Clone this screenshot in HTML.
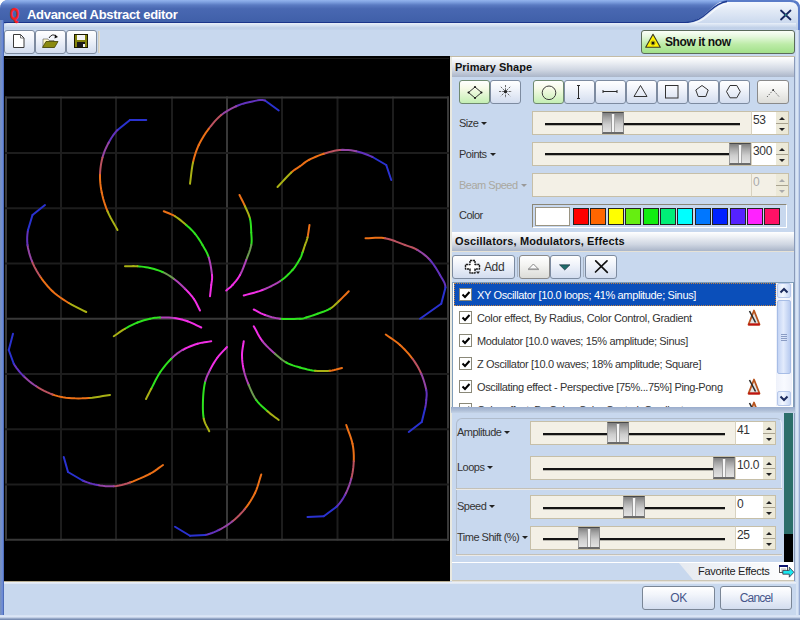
<!DOCTYPE html>
<html><head><meta charset="utf-8">
<style>
*{box-sizing:border-box}
html,body{margin:0;padding:0;width:800px;height:620px;overflow:hidden;background:#c8d8ee;font-family:"Liberation Sans",sans-serif;}
.a{position:absolute}
svg.a{display:block}
#title{left:0;top:0;width:800px;height:23px;background:linear-gradient(#8fb0ea 0px,#7ea2e2 2px,#5a7ac0 5px,#4a69b2 8px,#4363ab 14px,#4262aa 21px,#1a348a 22px,#1a348a 23px);}
#ttext{left:27px;top:7px;color:#fff;font-weight:bold;font-size:13px;letter-spacing:-0.3px;white-space:nowrap;line-height:15px}
.btn{border:1px solid #7d8ba0;border-radius:3px;background:linear-gradient(#ffffff 0%,#f2f5fb 35%,#d3ddef 100%);}
.gbtn{border:1px solid #6f8a70;border-radius:3px;background:linear-gradient(#ffffff 0%,#f6fae6 35%,#c4efb4 100%);}
.lbl{font-size:11px;color:#333;white-space:nowrap;letter-spacing:-0.5px;line-height:12px}
.dd{display:inline-block;width:0;height:0;border-left:3px solid transparent;border-right:3px solid transparent;border-top:3px solid #222;vertical-align:middle;margin-left:3px;position:relative;top:-1px}
.slider{background:#f3f0e6;border:1px solid #c6bfa8;}
.track{height:2px;background:#141414;box-shadow:0 1px 0 rgba(0,0,0,0.25)}
.thumb{width:22px;background:linear-gradient(#7e7e7e 0%,#a4a4a4 25%,#cdcdcd 60%,#e2e2e2 100%);border-top:1px solid #4a4a4a;border-bottom:2px solid #6a6a6a;border-left:1px solid #9a9a9a;border-right:1px solid #8a8a8a}
.thumb:after{content:"";position:absolute;left:8px;top:1px;width:2px;bottom:0;background:#f6f6f6;border-left:1px solid #9c9c9c;border-right:1px solid #a8a8a8;box-sizing:content-box}
.edit{background:#fff;border:1px solid #c6bfa8;border-left:1px solid #d8d2c0;font-size:12px;color:#333;padding-left:1px;line-height:17px;letter-spacing:-0.3px;white-space:nowrap;overflow:hidden}
.spin{background:#ece9d8;border:1px solid #c6bfa8;border-left:none}
.spin:after{content:"";position:absolute;left:0;right:0;top:11px;height:1px;background:#a9a390}
.hdr{background:linear-gradient(#ffffff 0%,#eef1f5 25%,#cfd6e2 65%,#aab5c8 100%);}
.row{font-size:11px;color:#3a3a3a;white-space:nowrap;letter-spacing:-0.35px;line-height:12px}
.cb{width:13px;height:13px;border:1px solid #8a8878;background:#fff}
.up,.dn{position:absolute;left:3px;width:0;height:0;border-left:3px solid transparent;border-right:3px solid transparent}
.up{border-bottom:3px solid #222}
.dn{border-top:3px solid #222}
</style></head><body>
<!-- window frame -->
<svg class="a" style="left:0;top:0" width="800" height="30">
<defs>
<linearGradient id="tb" x1="0" y1="0" x2="0" y2="1"><stop offset="0" stop-color="#94b4ee"/><stop offset="0.09" stop-color="#7ea0e0"/><stop offset="0.22" stop-color="#5a7ac2"/><stop offset="0.38" stop-color="#4968b2"/><stop offset="1" stop-color="#3f5fa8"/></linearGradient>
<linearGradient id="tab" x1="0" y1="0" x2="0" y2="1"><stop offset="0" stop-color="#f4f8fe"/><stop offset="0.3" stop-color="#e2eaf6"/><stop offset="0.75" stop-color="#cbd9ee"/><stop offset="1" stop-color="#b9cbe6"/></linearGradient>
<linearGradient id="tlb" x1="0" y1="0" x2="0" y2="1"><stop offset="0" stop-color="#f0f5fc"/><stop offset="1" stop-color="#c9d9ef"/></linearGradient>
</defs>
<rect x="0" y="0" width="800" height="30" fill="#ffffff"/>
<path d="M0 30 V9 Q0 0 9 0 H792 Q800 0 800 8 V30 Z" fill="#5a7cc8"/>
<path d="M2 30 V10 Q2 2 10 2 H790 Q798 2 798 10 V30 Z" fill="url(#tab)"/>
<path d="M0 23 V9 Q0 0 9 0 H727 C720 1 715 5 709 10.5 C702 17 696 21.5 686 22.5 L686 23 Z" fill="url(#tb)"/>
<path d="M727 1.5 C720 2.5 715 6 709 11.5 C702 18 696 22 684 23" fill="none" stroke="#1c3a90" stroke-width="1.3"/>
<path d="M729 3 C722 4 717 7.5 711 13 C704 19 699 23 688 24" fill="none" stroke="#ffffff" stroke-opacity="0.7" stroke-width="1.2"/>
<rect x="0" y="22" width="686" height="1.2" fill="#1a348a"/>
<path d="M781 10.5 L790.5 19.5 M790.5 10.5 L781 19.5" stroke="#14245e" stroke-width="1.8" stroke-linecap="round"/>
<circle cx="785.75" cy="15" r="0.9" fill="#1f8a7a"/>
<rect x="0" y="22" width="4" height="8" fill="#4a6ab4"/>
<defs><linearGradient id="tlb2" x1="0" y1="0" x2="0" y2="1"><stop offset="0" stop-color="#e8eff9"/><stop offset="0.7" stop-color="#bfcfe7"/><stop offset="1" stop-color="#c4d4ec"/></linearGradient></defs>
<path d="M4 30 V27 Q4 23 8 23 H796 V30 Z" fill="url(#tlb2)"/>
</svg>
<div class="a" style="left:10px;top:5px;color:#ff2020;font-weight:bold;font-size:17px;transform:scaleX(0.68);transform-origin:0 0;line-height:19px;-webkit-text-stroke:0.6px #ee1818">Q</div>
<div class="a" id="ttext">Advanced Abstract editor</div>
<div class="a" style="left:0;top:20px;width:4px;height:600px;background:linear-gradient(90deg,#7a92b8,#6e8cd8 60%,#3e5eaa)"></div>
<div class="a" style="left:796px;top:30px;width:4px;height:590px;background:linear-gradient(90deg,#d8e4f4,#d8e4f4 50%,#8098c8)"></div>
<div class="a" style="left:0;top:615px;width:800px;height:5px;background:linear-gradient(#d6e2f4 0%,#dce6f6 40%,#a8b8d4 60%,#6a80a8 100%)"></div>

<!-- toolbar -->
<div class="a btn" style="left:4px;top:30px;width:31px;height:24px"></div>
<div class="a btn" style="left:35px;top:30px;width:31px;height:24px"></div>
<div class="a btn" style="left:66px;top:30px;width:31px;height:24px"></div>
<svg class="a" style="left:4px;top:30px" width="96" height="24">
<path d="M9.5 4.5 H16.5 L20 8 V17.5 H9.5 Z" fill="#fff" stroke="#3a3a3a" stroke-width="1"/>
<path d="M16.5 4.5 V8 H20" fill="none" stroke="#555" stroke-width="0.8"/>
<path d="M39 9 H44 L45 10.5 H50 V17 H39 Z" fill="#fff8c8" stroke="#555" stroke-width="0.6"/>
<path d="M38.5 17.5 L42 11.5 H54 L50.5 17.5 Z" fill="#8a8a10" stroke="#404000" stroke-width="0.8"/>
<path d="M45 8 Q48 3 52 6" fill="none" stroke="#222" stroke-width="1"/>
<path d="M51 4.5 L54 7 L50.5 8.5 Z" fill="#111"/>
<rect x="70.5" y="4.5" width="13" height="13" fill="#84840c" stroke="#1a1a00" stroke-width="1"/>
<rect x="73" y="5" width="8" height="5" fill="#f4f4f4"/>
<rect x="73" y="12" width="8" height="5" fill="#1a1a1a"/>
<rect x="79" y="14" width="2" height="3" fill="#f0f0f0"/>
</svg>
<div class="a" style="left:98px;top:31px;width:2px;height:22px;background:linear-gradient(90deg,#c8c4b4,#eeeae0)"></div>

<div class="a" style="left:641px;top:30px;width:154px;height:24px;border:1px solid #5a6a5a;border-radius:3px;background:linear-gradient(#fbfff8 0%,#e6f8de 25%,#bdeca8 60%,#a2e08a 100%)"></div>
<svg class="a" style="left:644px;top:32px" width="18" height="17"><path d="M9 2.3 L16.3 15.3 H1.7 Z" fill="#fff200" stroke="#3a3a20" stroke-width="1.1" stroke-linejoin="round"/><path d="M9 8.2 V13.8 M6.2 11 H11.8 M7 9 L11 13 M11 9 L7 13" stroke="#a8a020" stroke-width="0.9"/><circle cx="9" cy="11" r="1.5" fill="#111"/></svg>
<div class="a" style="left:665px;top:35px;font-size:12px;font-weight:bold;color:#111;letter-spacing:-0.4px;white-space:nowrap">Show it now</div>

<!-- canvas -->
<div class="a" id="canvas" style="left:4px;top:56px;width:446px;height:525px;background:#000"></div>
<svg class="a" style="left:4px;top:56px" width="446" height="525" viewBox="0 0 446 525"><line x1="1" y1="2.5" x2="445" y2="2.5" stroke="#181818" stroke-width="1"/><g stroke-width="2"><line x1="2.00" y1="40.60" x2="2.00" y2="484.80" stroke="#383838"/><line x1="57.00" y1="40.60" x2="57.00" y2="484.80" stroke="#1d1d1d"/><line x1="112.00" y1="40.60" x2="112.00" y2="484.80" stroke="#1d1d1d"/><line x1="168.00" y1="40.60" x2="168.00" y2="484.80" stroke="#1d1d1d"/><line x1="223.00" y1="40.60" x2="223.00" y2="484.80" stroke="#383838"/><line x1="278.00" y1="40.60" x2="278.00" y2="484.80" stroke="#1d1d1d"/><line x1="333.50" y1="40.60" x2="333.50" y2="484.80" stroke="#1d1d1d"/><line x1="389.00" y1="40.60" x2="389.00" y2="484.80" stroke="#1d1d1d"/><line x1="444.00" y1="40.60" x2="444.00" y2="484.80" stroke="#383838"/><line x1="1.00" y1="41.60" x2="445.00" y2="41.60" stroke="#383838"/><line x1="1.00" y1="96.88" x2="445.00" y2="96.88" stroke="#1d1d1d"/><line x1="1.00" y1="152.15" x2="445.00" y2="152.15" stroke="#1d1d1d"/><line x1="1.00" y1="207.42" x2="445.00" y2="207.42" stroke="#1d1d1d"/><line x1="1.00" y1="262.70" x2="445.00" y2="262.70" stroke="#383838"/><line x1="1.00" y1="317.98" x2="445.00" y2="317.98" stroke="#1d1d1d"/><line x1="1.00" y1="373.25" x2="445.00" y2="373.25" stroke="#1d1d1d"/><line x1="1.00" y1="428.52" x2="445.00" y2="428.52" stroke="#1d1d1d"/><line x1="1.00" y1="483.80" x2="445.00" y2="483.80" stroke="#383838"/></g><g stroke-width="2" stroke-linecap="round" stroke-linejoin="round" fill="none"><path d="M142.25 64.00 L126.00 64.00" stroke="#2a32d0"/><path d="M126.00 64.00 L113.50 74.00" stroke="#2a32d0"/><path d="M113.50 74.00 L111.80 75.91 L110.21 77.89 L108.73 79.94 L107.34 82.06 L106.02 84.24 L104.75 86.50" stroke="#6232bd"/><path d="M104.75 86.50 L103.52 88.83 L102.34 91.22 L101.23 93.69 L100.21 96.22 L99.30 98.83 L98.50 101.50" stroke="#9444a4"/><path d="M98.50 101.50 L97.82 104.27 L97.23 107.15 L96.75 110.09 L96.38 113.07 L96.13 116.05 L96.00 119.00" stroke="#bc5260"/><path d="M96.00 119.00 L96.00 121.90 L96.12 124.79 L96.36 127.67 L96.71 130.57 L97.18 133.51 L97.75 136.50" stroke="#ec7016"/><path d="M97.75 136.50 L98.43 139.55 L99.21 142.66 L100.11 145.80 L101.12 148.95 L102.25 152.11 L103.50 155.25" stroke="#ec7016"/><path d="M103.50 155.25 L104.92 158.38 L106.52 161.50 L108.23 164.62 L110.01 167.75 L111.78 170.88 L113.50 174.00" stroke="#a9b114"/><path d="M274.75 54.50 L261.00 44.50" stroke="#2a32d0"/><path d="M261.00 44.50 L258.56 44.05 L256.05 44.05 L253.50 44.36 L250.95 44.87 L248.44 45.46 L246.00 46.00" stroke="#6232bd"/><path d="M246.00 46.00 L243.65 46.50 L241.37 47.05 L239.12 47.67 L236.88 48.40 L234.60 49.25 L232.25 50.25" stroke="#6232bd"/><path d="M232.25 50.25 L229.79 51.39 L227.25 52.65 L224.67 54.03 L222.11 55.55 L219.62 57.20 L217.25 59.00" stroke="#9444a4"/><path d="M217.25 59.00 L214.99 60.97 L212.81 63.12 L210.69 65.41 L208.64 67.80 L206.66 70.26 L204.75 72.75" stroke="#bc5260"/><path d="M204.75 72.75 L202.89 75.30 L201.07 77.94 L199.33 80.64 L197.68 83.40 L196.14 86.19 L194.75 89.00" stroke="#ec7016"/><path d="M194.75 89.00 L193.51 91.80 L192.42 94.60 L191.44 97.44 L190.56 100.34 L189.75 103.35 L189.00 106.50" stroke="#ec7016"/><path d="M189.00 106.50 L188.34 109.82 L187.80 113.31 L187.33 116.89 L186.90 120.53 L186.47 124.16 L186.00 127.75" stroke="#a9b114"/><path d="M387.25 124.00 L382.25 109.00" stroke="#2a32d0"/><path d="M382.25 109.00 L368.50 101.00" stroke="#2a32d0"/><path d="M368.50 101.00 L365.94 99.86 L363.27 98.75 L360.53 97.70 L357.76 96.75 L354.99 95.92 L352.25 95.25" stroke="#6232bd"/><path d="M352.25 95.25 L349.54 94.72 L346.83 94.31 L344.12 94.03 L341.42 93.88 L338.71 93.87 L336.00 94.00" stroke="#9444a4"/><path d="M336.00 94.00 L333.28 94.31 L330.54 94.79 L327.80 95.41 L325.07 96.13 L322.39 96.92 L319.75 97.75" stroke="#bc5260"/><path d="M319.75 97.75 L317.11 98.65 L314.43 99.65 L311.78 100.72 L309.24 101.82 L306.87 102.93 L304.75 104.00" stroke="#ec7016"/><path d="M304.75 104.00 L302.93 105.04 L301.37 106.08 L299.98 107.12 L298.69 108.17 L297.39 109.21 L296.00 110.25" stroke="#ec7016"/><path d="M296.00 110.25 L294.60 111.20 L293.27 112.03 L291.94 112.86 L290.54 113.81 L289.00 114.98 L287.25 116.50" stroke="#ec7016"/><path d="M287.25 116.50 L285.25 118.44 L283.04 120.72 L280.69 123.23 L278.27 125.86 L275.85 128.49 L273.50 131.00" stroke="#a9b114"/><path d="M361.50 182.25 L364.74 182.17 L367.98 182.00 L371.22 181.83 L374.46 181.75 L377.72 181.86 L381.00 182.25" stroke="#ec7016"/><path d="M381.00 182.25 L384.39 183.00 L387.91 184.06 L391.44 185.31 L394.87 186.63 L398.09 187.90 L401.00 189.00" stroke="#bc5260"/><path d="M401.00 189.00 L403.52 189.88 L405.72 190.61 L407.72 191.30 L409.61 192.03 L411.50 192.90 L413.50 194.00" stroke="#bc5260"/><path d="M413.50 194.00 L415.61 195.32 L417.76 196.78 L419.91 198.38 L422.02 200.11 L424.06 201.99 L426.00 204.00" stroke="#9444a4"/><path d="M426.00 204.00 L427.86 206.24 L429.69 208.72 L431.44 211.34 L433.09 214.00 L434.62 216.59 L436.00 219.00" stroke="#6232bd"/><path d="M436.00 219.00 L437.29 221.18 L438.53 223.21 L439.64 225.17 L440.56 227.15 L441.20 229.23 L441.50 231.50" stroke="#6232bd"/><path d="M441.50 231.50 L437.25 247.75" stroke="#2a32d0"/><path d="M437.25 247.75 L416.00 262.75" stroke="#2a32d0"/><path d="M381.75 278.50 L384.15 280.21 L386.56 281.88 L388.98 283.55 L391.38 285.26 L393.73 287.06 L396.00 289.00" stroke="#ec7016"/><path d="M396.00 289.00 L398.23 291.09 L400.44 293.30 L402.59 295.59 L404.68 297.95 L406.65 300.35 L408.50 302.75" stroke="#ec7016"/><path d="M408.50 302.75 L410.22 305.16 L411.83 307.61 L413.34 310.09 L414.75 312.61 L416.05 315.16 L417.25 317.75" stroke="#bc5260"/><path d="M417.25 317.75 L418.36 320.46 L419.38 323.31 L420.30 326.19 L421.09 329.00 L421.75 331.64 L422.25 334.00" stroke="#9444a4"/><path d="M422.25 334.00 L422.55 336.04 L422.67 337.84 L422.64 339.47 L422.53 340.99 L422.38 342.48 L422.25 344.00" stroke="#6232bd"/><path d="M422.25 344.00 L422.14 345.48 L422.00 346.84 L421.83 348.17 L421.61 349.55 L421.34 351.05 L421.00 352.75" stroke="#6232bd"/><path d="M421.00 352.75 L417.75 366.00" stroke="#2a32d0"/><path d="M417.75 366.00 L404.75 376.00" stroke="#2a32d0"/><path d="M342.25 369.00 L343.35 372.14 L344.52 375.30 L345.69 378.45 L346.79 381.59 L347.75 384.70 L348.50 387.75" stroke="#ec7016"/><path d="M348.50 387.75 L349.04 390.74 L349.43 393.68 L349.67 396.58 L349.80 399.46 L349.82 402.35 L349.75 405.25" stroke="#ec7016"/><path d="M349.75 405.25 L349.59 408.18 L349.33 411.13 L348.97 414.08 L348.50 417.01 L347.93 419.91 L347.25 422.75" stroke="#bc5260"/><path d="M347.25 422.75 L346.45 425.58 L345.54 428.42 L344.52 431.22 L343.41 433.94 L342.23 436.55 L341.00 439.00" stroke="#9444a4"/><path d="M341.00 439.00 L339.73 441.28 L338.41 443.42 L337.02 445.44 L335.54 447.36 L333.95 449.21 L332.25 451.00" stroke="#6232bd"/><path d="M332.25 451.00 L319.75 460.25" stroke="#2a32d0"/><path d="M319.75 460.25 L303.50 461.00" stroke="#2a32d0"/><path d="M257.25 418.50 L256.25 421.62 L255.31 424.77 L254.36 427.92 L253.36 431.04 L252.26 434.08 L251.00 437.00" stroke="#ec7016"/><path d="M251.00 437.00 L249.58 439.82 L248.04 442.57 L246.39 445.25 L244.66 447.84 L242.85 450.34 L241.00 452.75" stroke="#ec7016"/><path d="M241.00 452.75 L239.08 455.06 L237.06 457.30 L234.98 459.44 L232.85 461.48 L230.68 463.42 L228.50 465.25" stroke="#bc5260"/><path d="M228.50 465.25 L226.28 466.97 L224.01 468.58 L221.70 470.09 L219.38 471.50 L217.06 472.80 L214.75 474.00" stroke="#9444a4"/><path d="M214.75 474.00 L212.47 475.10 L210.21 476.10 L207.95 477.00 L205.68 477.79 L203.36 478.46 L201.00 479.00" stroke="#6232bd"/><path d="M201.00 479.00 L186.00 479.75" stroke="#2a32d0"/><path d="M186.00 479.75 L171.00 470.75" stroke="#2a32d0"/><path d="M159.00 409.00 L156.91 410.46 L154.93 411.92 L152.94 413.38 L150.85 414.83 L148.57 416.29 L146.00 417.75" stroke="#ec7016"/><path d="M146.00 417.75 L143.03 419.27 L139.71 420.85 L136.20 422.44 L132.65 423.95 L129.20 425.33 L126.00 426.50" stroke="#ec7016"/><path d="M126.00 426.50 L123.07 427.47 L120.31 428.31 L117.64 429.00 L115.03 429.56 L112.41 429.97 L109.75 430.25" stroke="#bc5260"/><path d="M109.75 430.25 L107.03 430.37 L104.29 430.32 L101.55 430.14 L98.82 429.84 L96.14 429.45 L93.50 429.00" stroke="#9444a4"/><path d="M93.50 429.00 L90.92 428.48 L88.39 427.89 L85.89 427.20 L83.42 426.42 L80.96 425.52 L78.50 424.50" stroke="#6232bd"/><path d="M78.50 424.50 L64.00 416.00" stroke="#2a32d0"/><path d="M64.00 416.00 L59.75 401.00" stroke="#2a32d0"/><path d="M106.00 339.00 L102.44 339.53 L98.87 340.11 L95.30 340.69 L91.74 341.22 L88.22 341.67 L84.75 342.00" stroke="#a9b114"/><path d="M84.75 342.00 L81.30 342.21 L77.85 342.35 L74.44 342.41 L71.09 342.37 L67.85 342.24 L64.75 342.00" stroke="#ec7016"/><path d="M64.75 342.00 L61.82 341.67 L59.06 341.27 L56.39 340.77 L53.78 340.15 L51.16 339.40 L48.50 338.50" stroke="#ec7016"/><path d="M48.50 338.50 L45.75 337.42 L42.94 336.17 L40.14 334.78 L37.39 333.31 L34.74 331.78 L32.25 330.25" stroke="#bc5260"/><path d="M32.25 330.25 L29.92 328.71 L27.71 327.14 L25.61 325.52 L23.59 323.83 L21.65 322.08 L19.75 320.25" stroke="#9444a4"/><path d="M19.75 320.25 L17.88 318.33 L16.05 316.31 L14.28 314.23 L12.62 312.10 L11.10 309.93 L9.75 307.75" stroke="#6232bd"/><path d="M9.75 307.75 L4.75 294.00" stroke="#2a32d0"/><path d="M4.75 294.00 L9.00 277.75" stroke="#2a32d0"/><path d="M82.25 256.00 L79.32 254.53 L76.37 253.10 L73.42 251.67 L70.49 250.20 L67.59 248.66 L64.75 247.00" stroke="#a9b114"/><path d="M64.75 247.00 L61.93 245.24 L59.10 243.41 L56.31 241.50 L53.59 239.51 L50.98 237.43 L48.50 235.25" stroke="#ec7016"/><path d="M48.50 235.25 L46.15 232.94 L43.89 230.49 L41.73 227.95 L39.69 225.37 L37.78 222.79 L36.00 220.25" stroke="#ec7016"/><path d="M36.00 220.25 L34.37 217.76 L32.87 215.30 L31.50 212.83 L30.24 210.34 L29.08 207.82 L28.00 205.25" stroke="#bc5260"/><path d="M28.00 205.25 L26.99 202.60 L26.06 199.88 L25.22 197.12 L24.50 194.37 L23.92 191.65 L23.50 189.00" stroke="#9444a4"/><path d="M23.50 189.00 L23.25 186.43 L23.15 183.91 L23.19 181.42 L23.35 178.95 L23.63 176.49 L24.00 174.00" stroke="#6232bd"/><path d="M24.00 174.00 L28.50 159.00" stroke="#2a32d0"/><path d="M28.50 159.00 L41.00 149.00" stroke="#2a32d0"/><path d="M159.75 155.25 L161.62 156.04 L163.50 156.78 L165.38 157.52 L167.25 158.31 L169.12 159.20 L171.00 160.25" stroke="#ec7016"/><path d="M171.00 160.25 L172.90 161.49 L174.84 162.89 L176.78 164.39 L178.69 165.94 L180.52 167.50 L182.25 169.00" stroke="#a9b114"/><path d="M182.25 169.00 L183.87 170.43 L185.40 171.82 L186.86 173.22 L188.27 174.65 L189.64 176.15 L191.00 177.75" stroke="#2ee21e"/><path d="M191.00 177.75 L192.34 179.47 L193.64 181.27 L194.91 183.14 L196.14 185.06 L197.34 187.02 L198.50 189.00" stroke="#2ee21e"/><path d="M198.50 189.00 L199.65 190.95 L200.79 192.89 L201.89 194.86 L202.94 196.92 L203.90 199.11 L204.75 201.50" stroke="#2ee21e"/><path d="M204.75 201.50 L205.51 204.21 L206.20 207.24 L206.81 210.41 L207.32 213.54 L207.72 216.46 L208.00 219.00" stroke="#b040b8"/><path d="M208.00 219.00 L208.11 221.09 L208.06 222.84 L207.91 224.39 L207.69 225.85 L207.45 227.35 L207.25 229.00" stroke="#f22ee6"/><path d="M207.25 229.00 L207.07 230.80 L206.87 232.66 L206.66 234.55 L206.44 236.45 L206.21 238.36 L206.00 240.25" stroke="#f22ee6"/><path d="M235.50 139.00 L236.42 140.86 L237.35 142.70 L238.28 144.55 L239.20 146.41 L240.11 148.30 L241.00 150.25" stroke="#ec7016"/><path d="M241.00 150.25 L241.91 152.25 L242.84 154.28 L243.77 156.34 L244.63 158.44 L245.39 160.58 L246.00 162.75" stroke="#a9b114"/><path d="M246.00 162.75 L246.44 164.98 L246.74 167.29 L246.94 169.62 L247.06 171.96 L247.16 174.27 L247.25 176.50" stroke="#2ee21e"/><path d="M247.25 176.50 L247.38 178.63 L247.53 180.67 L247.64 182.67 L247.67 184.69 L247.55 186.79 L247.25 189.00" stroke="#2ee21e"/><path d="M247.25 189.00 L246.72 191.36 L246.00 193.81 L245.14 196.34 L244.19 198.91 L243.21 201.47 L242.25 204.00" stroke="#6c9a50"/><path d="M242.25 204.00 L241.30 206.56 L240.31 209.19 L239.28 211.81 L238.22 214.37 L237.13 216.79 L236.00 219.00" stroke="#b040b8"/><path d="M236.00 219.00 L234.81 221.01 L233.55 222.87 L232.25 224.59 L230.95 226.19 L229.69 227.65 L228.50 229.00" stroke="#f22ee6"/><path d="M228.50 229.00 L227.39 230.18 L226.32 231.17 L225.30 232.03 L224.29 232.83 L223.28 233.64 L222.25 234.50" stroke="#f22ee6"/><path d="M305.50 169.00 L305.17 171.14 L304.85 173.35 L304.53 175.56 L304.20 177.70 L303.86 179.71 L303.50 181.50" stroke="#ec7016"/><path d="M303.50 181.50 L303.11 183.04 L302.70 184.37 L302.28 185.56 L301.85 186.69 L301.42 187.81 L301.00 189.00" stroke="#a9b114"/><path d="M301.00 189.00 L300.58 190.26 L300.17 191.55 L299.75 192.83 L299.33 194.09 L298.92 195.32 L298.50 196.50" stroke="#a9b114"/><path d="M298.50 196.50 L298.14 197.56 L297.85 198.49 L297.56 199.39 L297.20 200.34 L296.71 201.43 L296.00 202.75" stroke="#2ee21e"/><path d="M296.00 202.75 L295.10 204.34 L294.06 206.13 L292.88 208.06 L291.56 210.06 L290.10 212.07 L288.50 214.00" stroke="#2ee21e"/><path d="M288.50 214.00 L286.76 215.90 L284.89 217.84 L282.88 219.78 L280.72 221.69 L278.43 223.52 L276.00 225.25" stroke="#2ee21e"/><path d="M276.00 225.25 L273.39 226.89 L270.58 228.47 L267.64 229.98 L264.61 231.42 L261.55 232.76 L258.50 234.00" stroke="#b040b8"/><path d="M258.50 234.00 L255.45 235.10 L252.34 236.07 L249.20 236.95 L246.05 237.79 L242.89 238.62 L239.75 239.50" stroke="#f22ee6"/><path d="M344.75 235.25 L343.07 236.95 L341.37 238.68 L339.67 240.41 L337.99 242.10 L336.34 243.73 L334.75 245.25" stroke="#ec7016"/><path d="M334.75 245.25 L333.26 246.67 L331.88 248.03 L330.53 249.31 L329.15 250.53 L327.66 251.67 L326.00 252.75" stroke="#a9b114"/><path d="M326.00 252.75 L324.12 253.74 L322.06 254.65 L319.91 255.48 L317.71 256.27 L315.55 257.02 L313.50 257.75" stroke="#2ee21e"/><path d="M313.50 257.75 L311.49 258.48 L309.47 259.19 L307.48 259.86 L305.58 260.48 L303.82 261.03 L302.25 261.50" stroke="#2ee21e"/><path d="M302.25 261.50 L301.08 261.87 L300.31 262.15 L299.67 262.36 L298.92 262.52 L297.78 262.64 L296.00 262.75" stroke="#2ee21e"/><path d="M296.00 262.75 L293.40 262.87 L290.17 262.98 L286.55 263.06 L282.81 263.07 L279.20 262.98 L276.00 262.75" stroke="#2ee21e"/><path d="M276.00 262.75 L273.17 262.36 L270.49 261.84 L267.95 261.22 L265.54 260.52 L263.23 259.77 L261.00 259.00" stroke="#b040b8"/><path d="M261.00 259.00 L258.91 258.18 L256.97 257.30 L255.14 256.36 L253.36 255.40 L251.58 254.44 L249.75 253.50" stroke="#f22ee6"/><path d="M249.75 270.25 L251.16 272.78 L252.53 275.34 L253.89 277.91 L255.31 280.44 L256.82 282.89 L258.50 285.25" stroke="#f22ee6"/><path d="M258.50 285.25 L260.38 287.52 L262.44 289.74 L264.59 291.89 L266.79 293.95 L268.95 295.91 L271.00 297.75" stroke="#b040b8"/><path d="M271.00 297.75 L272.92 299.47 L274.75 301.08 L276.55 302.59 L278.36 304.00 L280.24 305.30 L282.25 306.50" stroke="#6c9a50"/><path d="M282.25 306.50 L284.38 307.57 L286.60 308.51 L288.89 309.34 L291.23 310.10 L293.61 310.81 L296.00 311.50" stroke="#2ee21e"/><path d="M296.00 311.50 L298.43 312.18 L300.91 312.83 L303.42 313.44 L305.95 313.97 L308.49 314.42 L311.00 314.75" stroke="#2ee21e"/><path d="M311.00 314.75 L313.53 314.97 L316.11 315.09 L318.69 315.12 L321.22 315.07 L323.67 314.95 L326.00 314.75" stroke="#a9b114"/><path d="M326.00 314.75 L328.17 314.45 L330.22 314.04 L332.19 313.55 L334.11 313.02 L336.03 312.49 L338.00 312.00" stroke="#ec7016"/><path d="M239.75 285.25 L239.42 287.53 L239.04 289.79 L238.66 292.05 L238.32 294.32 L238.09 296.64 L238.00 299.00" stroke="#f22ee6"/><path d="M238.00 299.00 L238.05 301.43 L238.20 303.91 L238.45 306.42 L238.80 308.95 L239.23 311.49 L239.75 314.00" stroke="#f22ee6"/><path d="M239.75 314.00 L240.37 316.50 L241.08 319.00 L241.89 321.50 L242.78 324.00 L243.73 326.50 L244.75 329.00" stroke="#b040b8"/><path d="M244.75 329.00 L245.81 331.54 L246.93 334.14 L248.11 336.73 L249.38 339.28 L250.75 341.72 L252.25 344.00" stroke="#6c9a50"/><path d="M252.25 344.00 L253.91 346.12 L255.72 348.12 L257.64 350.02 L259.61 351.82 L261.58 353.56 L263.50 355.25" stroke="#2ee21e"/><path d="M263.50 355.25 L265.38 356.85 L267.25 358.35 L269.12 359.78 L271.00 361.18 L272.88 362.57 L274.75 364.00" stroke="#a9b114"/><path d="M223.00 291.00 L221.39 292.73 L219.76 294.43 L218.12 296.12 L216.52 297.85 L214.97 299.63 L213.50 301.50" stroke="#f22ee6"/><path d="M213.50 301.50 L212.11 303.47 L210.76 305.52 L209.47 307.62 L208.24 309.76 L207.08 311.89 L206.00 314.00" stroke="#f22ee6"/><path d="M206.00 314.00 L204.99 316.03 L204.04 317.98 L203.16 319.94 L202.35 321.96 L201.63 324.13 L201.00 326.50" stroke="#b040b8"/><path d="M201.00 326.50 L200.46 329.11 L200.01 331.92 L199.64 334.86 L199.35 337.89 L199.14 340.95 L199.00 344.00" stroke="#2ee21e"/><path d="M199.00 344.00 L198.91 347.12 L198.87 350.39 L198.91 353.69 L199.05 356.92 L199.32 359.97 L199.75 362.75" stroke="#2ee21e"/><path d="M199.75 362.75 L200.39 365.20 L201.23 367.38 L202.20 369.39 L203.24 371.31 L204.28 373.24 L205.25 375.25" stroke="#a9b114"/><path d="M207.25 285.25 L204.97 285.62 L202.71 285.94 L200.45 286.27 L198.18 286.64 L195.86 287.12 L193.50 287.75" stroke="#f22ee6"/><path d="M193.50 287.75 L191.03 288.55 L188.45 289.46 L185.84 290.48 L183.27 291.59 L180.80 292.77 L178.50 294.00" stroke="#f22ee6"/><path d="M178.50 294.00 L176.41 295.26 L174.47 296.55 L172.64 297.91 L170.86 299.37 L169.08 300.97 L167.25 302.75" stroke="#b040b8"/><path d="M167.25 302.75 L165.35 304.72 L163.41 306.87 L161.47 309.16 L159.56 311.55 L157.73 314.01 L156.00 316.50" stroke="#2ee21e"/><path d="M156.00 316.50 L154.36 319.13 L152.77 321.95 L151.25 324.84 L149.81 327.69 L148.48 330.36 L147.25 332.75" stroke="#2ee21e"/><path d="M147.25 332.75 L146.17 334.81 L145.24 336.61 L144.41 338.25 L143.62 339.81 L142.83 341.36 L142.00 343.00" stroke="#a9b114"/><path d="M197.25 271.50 L194.96 270.42 L192.67 269.31 L190.38 268.19 L188.08 267.11 L185.79 266.12 L183.50 265.25" stroke="#f22ee6"/><path d="M183.50 265.25 L181.21 264.50 L178.92 263.84 L176.62 263.27 L174.33 262.77 L172.04 262.35 L169.75 262.00" stroke="#f22ee6"/><path d="M169.75 262.00 L167.41 261.74 L165.03 261.56 L162.64 261.47 L160.31 261.44 L158.07 261.45 L156.00 261.50" stroke="#b040b8"/><path d="M156.00 261.50 L154.15 261.58 L152.48 261.69 L150.92 261.86 L149.38 262.08 L147.77 262.38 L146.00 262.75" stroke="#2ee21e"/><path d="M146.00 262.75 L144.06 263.20 L142.02 263.72 L139.91 264.31 L137.76 264.97 L135.61 265.70 L133.50 266.50" stroke="#2ee21e"/><path d="M133.50 266.50 L131.40 267.38 L129.29 268.35 L127.17 269.39 L125.07 270.48 L123.01 271.61 L121.00 272.75" stroke="#2ee21e"/><path d="M121.00 272.75 L119.05 273.93 L117.16 275.16 L115.30 276.42 L113.45 277.70 L111.61 278.99 L109.75 280.25" stroke="#a9b114"/><path d="M196.00 254.50 L194.99 252.52 L194.01 250.52 L193.03 248.52 L192.02 246.54 L190.94 244.61 L189.75 242.75" stroke="#f22ee6"/><path d="M189.75 242.75 L188.47 240.98 L187.11 239.29 L185.69 237.64 L184.19 236.02 L182.63 234.40 L181.00 232.75" stroke="#f22ee6"/><path d="M181.00 232.75 L179.27 231.05 L177.44 229.30 L175.53 227.55 L173.59 225.84 L171.65 224.23 L169.75 222.75" stroke="#b040b8"/><path d="M169.75 222.75 L167.89 221.41 L166.05 220.16 L164.20 219.00 L162.34 217.93 L160.45 216.93 L158.50 216.00" stroke="#6c9a50"/><path d="M158.50 216.00 L156.49 215.15 L154.43 214.38 L152.33 213.69 L150.21 213.06 L148.10 212.50 L146.00 212.00" stroke="#2ee21e"/><path d="M146.00 212.00 L143.92 211.56 L141.83 211.19 L139.75 210.88 L137.67 210.62 L135.58 210.41 L133.50 210.25" stroke="#2ee21e"/><path d="M133.50 210.25 L131.42 210.15 L129.33 210.12 L127.25 210.14 L125.17 210.19 L123.08 210.23 L121.00 210.25" stroke="#a9b114"/></g></svg>
<div class="a" style="left:4px;top:581px;width:446px;height:1px;background:#b8ae94"></div>
<div class="a" style="left:4px;top:582px;width:792px;height:2px;background:linear-gradient(#eef2f8,#dbe5f3)"></div>

<!-- right panel -->
<div class="a" style="left:450px;top:56px;width:345px;height:525px;background:#c8d8ee;border-left:2px solid #e8e8e0;border-right:1px solid #8a9ab8"></div>
<div class="a" style="left:450px;top:56px;width:345px;height:1px;background:#c4bca6"></div>
<div class="a hdr" style="left:452px;top:57px;width:342px;height:20px"></div>
<div class="a" style="left:455px;top:61px;font-size:11px;font-weight:bold;color:#111;white-space:nowrap;line-height:12px">Primary Shape</div>

<!-- shape buttons -->
<div class="a gbtn" style="left:459px;top:80px;width:31px;height:24px"></div>
<div class="a btn" style="left:490px;top:80px;width:31px;height:24px"></div>
<div class="a gbtn" style="left:533px;top:80px;width:31px;height:24px"></div>
<div class="a btn" style="left:564px;top:80px;width:31px;height:24px"></div>
<div class="a btn" style="left:595px;top:80px;width:31px;height:24px"></div>
<div class="a btn" style="left:626px;top:80px;width:31px;height:24px"></div>
<div class="a btn" style="left:657px;top:80px;width:31px;height:24px"></div>
<div class="a btn" style="left:688px;top:80px;width:31px;height:24px"></div>
<div class="a btn" style="left:719px;top:80px;width:31px;height:24px"></div>
<div class="a" style="left:757px;top:80px;width:32px;height:24px;border:1px solid #8a8a8a;border-radius:3px;background:linear-gradient(#ffffff 0%,#f4f4f2 40%,#dcdcd8 100%)"></div>

<svg class="a" style="left:455px;top:78px" width="340" height="28" fill="none" stroke="#333" stroke-width="1">
<g transform="translate(-455,-78)">
<path d="M475 87 L481.5 92.5 L475 98 L468.5 92.5 Z"/>
<g fill="#111" stroke="none"><circle cx="475" cy="87" r="1"/><circle cx="481.5" cy="92.5" r="1"/><circle cx="475" cy="98" r="1"/><circle cx="468.5" cy="92.5" r="1"/></g>
<g stroke="#5a5a5a" stroke-width="0.9"><path d="M505.5 85 V98 M499 91.5 H512 M500.8 86.8 L510.2 96.2 M510.2 86.8 L500.8 96.2" stroke-dasharray="2.2 1"/></g>
<circle cx="505.5" cy="91.5" r="1.6" fill="#222" stroke="none"/>
<circle cx="549" cy="92.8" r="6.8" stroke="#3c3c3c"/>
<path d="M578.5 85.5 V98.5 M577 85.5 H580 M577 98.5 H580" stroke="#2a2a2a"/>
<path d="M603 91.5 H617 M603 90 V93 M617 90 V93" stroke="#2a2a2a"/>
<path d="M640.5 85.5 L647 96.5 H634 Z" stroke="#333"/>
<rect x="665.5" y="85.5" width="12.5" height="12.5" stroke="#333"/>
<path d="M702 85.5 L708.2 90 L705.8 96.5 H698.2 L695.8 90 Z" stroke="#333"/>
<path d="M726.5 91.6 L730 85.5 H736.8 L740.3 91.6 L736.8 97.8 H730 Z" stroke="#333"/>
<path d="M767 97 L773.2 90 L779.4 97" stroke="#555" stroke-dasharray="1.2 1.4"/>
<circle cx="773.2" cy="90" r="0.9" fill="#333" stroke="none"/>
</g></svg>
<!-- sliders primary -->
<div class="a lbl" style="left:459px;top:117px">Size<span class="dd"></span></div>
<div class="a slider" style="left:532px;top:111px;width:220px;height:24px"></div>
<div class="a track" style="left:545px;top:123px;width:195px"></div>
<div class="a thumb" style="left:602px;top:112px;height:22px"></div>
<div class="a edit" style="left:751px;top:111px;width:26px;height:24px">53</div>
<div class="a spin" style="left:776px;top:111px;width:13px;height:24px"><div class="up" style="top:5px"></div><div class="dn" style="top:16px"></div></div>

<div class="a lbl" style="left:459px;top:148px">Points<span class="dd"></span></div>
<div class="a slider" style="left:532px;top:142px;width:220px;height:24px"></div>
<div class="a track" style="left:545px;top:153px;width:185px"></div>
<div class="a thumb" style="left:729px;top:143px;height:22px"></div>
<div class="a edit" style="left:751px;top:142px;width:26px;height:24px">300</div>
<div class="a spin" style="left:776px;top:142px;width:13px;height:24px"><div class="up" style="top:5px"></div><div class="dn" style="top:16px"></div></div>

<div class="a lbl" style="left:459px;top:179px;color:#aaa8a0">Beam Speed<span class="dd" style="border-top-color:#999"></span></div>
<div class="a slider" style="left:532px;top:173px;width:220px;height:24px"></div>
<div class="a edit" style="left:751px;top:173px;width:26px;height:24px;background:#f3f0e6;color:#aaa">0</div>
<div class="a spin" style="left:776px;top:173px;width:13px;height:24px"><div class="up" style="top:5px;border-bottom-color:#aaa"></div><div class="dn" style="top:16px;border-top-color:#aaa"></div></div>

<div class="a lbl" style="left:459px;top:209px">Color</div>
<div class="a" style="left:532px;top:204px;width:255px;height:24px;border-top:1px solid #8a8676;border-left:1px solid #8a8676;border-bottom:1px solid #fff;border-right:1px solid #fff;background:#c8d8ee"></div>
<div class="a" style="left:535px;top:207px;width:35px;height:19px;background:#fff;border:1px solid #9a9482"></div>
<div class="a" style="left:573.0px;top:208px;width:16px;height:17px;background:#ff0000;border:1px solid #222"></div><div class="a" style="left:590.4px;top:208px;width:16px;height:17px;background:#ff6600;border:1px solid #222"></div><div class="a" style="left:607.8px;top:208px;width:16px;height:17px;background:#ffff00;border:1px solid #222"></div><div class="a" style="left:625.2px;top:208px;width:16px;height:17px;background:#66ee11;border:1px solid #222"></div><div class="a" style="left:642.6px;top:208px;width:16px;height:17px;background:#11ee11;border:1px solid #222"></div><div class="a" style="left:660.0px;top:208px;width:16px;height:17px;background:#00ee77;border:1px solid #222"></div><div class="a" style="left:677.4px;top:208px;width:16px;height:17px;background:#00ffff;border:1px solid #222"></div><div class="a" style="left:694.8px;top:208px;width:16px;height:17px;background:#0077ff;border:1px solid #222"></div><div class="a" style="left:712.2px;top:208px;width:16px;height:17px;background:#0022ff;border:1px solid #222"></div><div class="a" style="left:729.6px;top:208px;width:16px;height:17px;background:#5522ff;border:1px solid #222"></div><div class="a" style="left:747.0px;top:208px;width:16px;height:17px;background:#ff22ff;border:1px solid #222"></div><div class="a" style="left:764.4px;top:208px;width:16px;height:17px;background:#ff1166;border:1px solid #222"></div>

<!-- oscillators header -->
<div class="a hdr" style="left:452px;top:232px;width:342px;height:19px"></div>
<div class="a" style="left:452px;top:251px;width:342px;height:1px;background:#e6e2d6"></div>
<div class="a" style="left:455px;top:235px;font-size:11px;font-weight:bold;color:#111;white-space:nowrap;letter-spacing:0.15px;line-height:12px">Oscillators, Modulators, Effects</div>

<div class="a btn" style="left:452px;top:255px;width:63px;height:24px"></div>
<div class="a lbl" style="left:484px;top:261px;font-size:12px;color:#333;letter-spacing:-0.4px">Add</div>
<div class="a" style="left:517px;top:257px;width:1px;height:20px;background:#a8b4c4"></div>
<div class="a" style="left:519px;top:255px;width:31px;height:24px;border:1px solid #8a8a8a;border-radius:3px;background:linear-gradient(#ffffff 0%,#f4f4f2 40%,#dcdcd8 100%)"></div>
<div class="a btn" style="left:550px;top:255px;width:31px;height:24px"></div>
<div class="a" style="left:583px;top:257px;width:1px;height:20px;background:#a8b4c4"></div>
<div class="a btn" style="left:585px;top:255px;width:32px;height:24px"></div>

<svg class="a" style="left:450px;top:252px" width="170" height="30">
<path d="M20 8.5 H25 V12.5 H29.5 V17 H25 V21 H20 V17 H15.5 V12.5 H20 Z" fill="#fff" stroke="#1a1a1a" stroke-width="1.4" stroke-linejoin="round" stroke-dasharray="2.2 0.6"/>
<path d="M26 19.5 H30 L28 22 Z" fill="#222"/>
<path d="M78.5 17 L83.4 12 L88.3 17 Z" fill="#fafafa" stroke="#8a8a8a" stroke-width="1"/>
<path d="M78 17.5 H89" stroke="#9a9a9a" stroke-width="1.2"/>
<path d="M109.5 12.8 H120 L114.75 18 Z" fill="#1e6c6a" stroke="#123" stroke-width="0.6"/>
<path d="M145.7 8.8 L157.3 20.3 M157 8.8 L145.5 20" stroke="#111" stroke-width="1.7" stroke-linecap="round"/>
</svg>
<!-- list -->
<div class="a" style="left:452px;top:282px;width:342px;height:126px;background:#fff;border:1px solid #7f9db9"></div>
<div class="a" style="left:453px;top:283px;width:323px;height:124px;overflow:hidden"><div class="a" style="left:1px;top:0px;width:322px;height:23px;background:#0b4fba;outline:1px dotted #c08040;outline-offset:-1px"></div><div class="a cb" style="left:6px;top:5px"></div><svg class="a" style="left:8px;top:7px" width="10" height="10"><path d="M1.5 4.5 L4 7 L8.5 2" fill="none" stroke="#000" stroke-width="2"/></svg><div class="a row" style="left:24px;top:6px;color:#fff">XY Oscillator [10.0 loops; 41% amplitude; Sinus]</div><div class="a cb" style="left:6px;top:28px"></div><svg class="a" style="left:8px;top:30px" width="10" height="10"><path d="M1.5 4.5 L4 7 L8.5 2" fill="none" stroke="#000" stroke-width="2"/></svg><div class="a row" style="left:24px;top:29px;color:#333">Color effect, By Radius, Color Control, Gradient</div><div class="a cb" style="left:6px;top:51px"></div><svg class="a" style="left:8px;top:53px" width="10" height="10"><path d="M1.5 4.5 L4 7 L8.5 2" fill="none" stroke="#000" stroke-width="2"/></svg><div class="a row" style="left:24px;top:52px;color:#333">Modulator [10.0 waves; 15% amplitude; Sinus]</div><div class="a cb" style="left:6px;top:74px"></div><svg class="a" style="left:8px;top:76px" width="10" height="10"><path d="M1.5 4.5 L4 7 L8.5 2" fill="none" stroke="#000" stroke-width="2"/></svg><div class="a row" style="left:24px;top:75px;color:#333">Z Oscillator [10.0 waves; 18% amplitude; Square]</div><div class="a cb" style="left:6px;top:97px"></div><svg class="a" style="left:8px;top:99px" width="10" height="10"><path d="M1.5 4.5 L4 7 L8.5 2" fill="none" stroke="#000" stroke-width="2"/></svg><div class="a row" style="left:24px;top:98px;color:#333">Oscillating effect - Perspective [75%...75%] Ping-Pong</div><div class="a cb" style="left:6px;top:120px"></div><svg class="a" style="left:8px;top:122px" width="10" height="10"><path d="M1.5 4.5 L4 7 L8.5 2" fill="none" stroke="#000" stroke-width="2"/></svg><div class="a row" style="left:24px;top:121px;color:#333">Color effect, By Color, Color Control, Gradient</div></div><svg class="a" style="left:0;top:0;overflow:hidden" width="800" height="620"><defs><clipPath id="lc"><rect x="453" y="283" width="323" height="124"/></clipPath></defs><g clip-path="url(#lc)"><path d="M754.0 310.5 L759.5 324.5 L748.5 324.5 Z" fill="#e4e4e4" stroke="#b8541e" stroke-width="1.8" stroke-linejoin="round"/><path d="M748.3 324.5 H759.7" stroke="#c01212" stroke-width="2"/><path d="M749.5 311.0 L755.5 322.5" stroke="#2a2a2a" stroke-width="1.6"/><path d="M754.0 379.5 L759.5 393.5 L748.5 393.5 Z" fill="#e4e4e4" stroke="#b8541e" stroke-width="1.8" stroke-linejoin="round"/><path d="M748.3 393.5 H759.7" stroke="#c01212" stroke-width="2"/><path d="M749.5 380.0 L755.5 391.5" stroke="#2a2a2a" stroke-width="1.6"/><path d="M754.0 402.5 L759.5 416.5 L748.5 416.5 Z" fill="#e4e4e4" stroke="#b8541e" stroke-width="1.8" stroke-linejoin="round"/><path d="M748.3 416.5 H759.7" stroke="#c01212" stroke-width="2"/><path d="M749.5 403.0 L755.5 414.5" stroke="#2a2a2a" stroke-width="1.6"/></g></svg><div class="a" style="left:776px;top:283px;width:16px;height:123px;background:linear-gradient(90deg,#eef1fa,#f8faff 50%,#eef1fa)"></div><div class="a" style="left:777px;top:283px;width:14px;height:15px;border:1px solid #b7c8ea;border-radius:2px;background:linear-gradient(90deg,#d8e4fa,#f4f8ff 40%,#c8d8f6)"></div><svg class="a" style="left:777px;top:283px" width="14" height="15"><path d="M3.5 9.5 L7 6 L10.5 9.5" fill="none" stroke="#1b2a5c" stroke-width="2"/></svg><div class="a" style="left:777px;top:300px;width:14px;height:74px;border:1px solid #a7bde6;border-radius:2px;background:linear-gradient(90deg,#c4d4f4,#e2ebfc 45%,#b8cbf0)"></div><svg class="a" style="left:777px;top:333px" width="14" height="9"><path d="M4 1.5 H10 M4 3.5 H10 M4 5.5 H10 M4 7.5 H10" stroke="#8a9cc4" stroke-width="1"/></svg><div class="a" style="left:777px;top:391px;width:14px;height:15px;border:1px solid #b7c8ea;border-radius:2px;background:linear-gradient(90deg,#d8e4fa,#f4f8ff 40%,#c8d8f6)"></div><svg class="a" style="left:777px;top:391px" width="14" height="15"><path d="M3.5 5.5 L7 9 L10.5 5.5" fill="none" stroke="#1b2a5c" stroke-width="2"/></svg>

<div class="a" style="left:451px;top:407px;width:344px;height:6px;background:linear-gradient(#9aaccc,#b0c0d8 60%,#c4d2e6)"></div>

<!-- params -->
<div class="a" style="left:456px;top:418px;width:326px;height:71px;border:1px solid #b0bccc;border-bottom:none;border-right:1px solid #e8eef8;border-radius:6px 6px 0 0"></div>
<div class="a" style="left:456px;top:488px;width:326px;height:2px;background:linear-gradient(#b0aca0,#ffffff)"></div>
<div class="a" style="left:456px;top:554px;width:326px;height:2px;background:linear-gradient(#b0aca0,#ffffff)"></div>
<div class="a" style="left:456px;top:490px;width:1px;height:64px;background:#b0bccc"></div>
<div class="a lbl" style="left:457px;top:426px">Amplitude<span class="dd"></span></div><div class="a slider" style="left:530px;top:421px;width:206px;height:24px"></div><div class="a track" style="left:543px;top:433px;width:182px"></div><div class="a thumb" style="left:607px;top:422px;height:22px"></div><div class="a edit" style="left:735px;top:421px;width:29px;height:24px">41</div><div class="a spin" style="left:763px;top:421px;width:13px;height:24px"><div class="up" style="top:5px"></div><div class="dn" style="top:16px"></div></div><div class="a lbl" style="left:457px;top:461px">Loops<span class="dd"></span></div><div class="a slider" style="left:530px;top:456px;width:206px;height:24px"></div><div class="a track" style="left:543px;top:468px;width:182px"></div><div class="a thumb" style="left:713px;top:457px;height:22px"></div><div class="a edit" style="left:735px;top:456px;width:29px;height:24px">10.0</div><div class="a spin" style="left:763px;top:456px;width:13px;height:24px"><div class="up" style="top:5px"></div><div class="dn" style="top:16px"></div></div><div class="a lbl" style="left:457px;top:500px">Speed<span class="dd"></span></div><div class="a slider" style="left:530px;top:495px;width:206px;height:24px"></div><div class="a track" style="left:543px;top:507px;width:182px"></div><div class="a thumb" style="left:623px;top:496px;height:22px"></div><div class="a edit" style="left:735px;top:495px;width:29px;height:24px">0</div><div class="a spin" style="left:763px;top:495px;width:13px;height:24px"><div class="up" style="top:5px"></div><div class="dn" style="top:16px"></div></div><div class="a lbl" style="left:457px;top:531px">Time Shift (%)<span class="dd"></span></div><div class="a slider" style="left:530px;top:526px;width:206px;height:24px"></div><div class="a track" style="left:543px;top:538px;width:182px"></div><div class="a thumb" style="left:578px;top:527px;height:22px"></div><div class="a edit" style="left:735px;top:526px;width:29px;height:24px">25</div><div class="a spin" style="left:763px;top:526px;width:13px;height:24px"><div class="up" style="top:5px"></div><div class="dn" style="top:16px"></div></div>

<div class="a" style="left:784px;top:413px;width:9px;height:121px;background:#2c6e6a"></div>
<div class="a" style="left:784px;top:534px;width:9px;height:28px;background:#000"></div>

<!-- favorite effects -->
<div class="a" style="left:452px;top:562px;width:342px;height:1px;background:#fff"></div>
<svg class="a" style="left:452px;top:563px" width="342" height="18"><defs><linearGradient id="fe" x1="0" x2="1"><stop offset="0" stop-color="#e6eaf0"/><stop offset="1" stop-color="#ffffff"/></linearGradient></defs><path d="M227 0 L342 0 L342 18 L242 18 Z" fill="url(#fe)"/></svg>
<div class="a lbl" style="left:698px;top:565px;color:#222;letter-spacing:-0.3px">Favorite Effects</div>
<svg class="a" style="left:776px;top:562px" width="20" height="18"><rect x="3.5" y="3.5" width="8" height="7" fill="#fff" stroke="#555" stroke-width="1"/><rect x="3" y="3" width="9" height="2" fill="#0c1470"/><path d="M5 7 H10 M5 9 H9" stroke="#999" stroke-width="0.8"/><path d="M6.8 8.4 H13.3 V5.2 L17.9 10.25 L13.3 15.2 V12.2 H6.8 Z" fill="#18e8f0" stroke="#3a2a40" stroke-width="0.8" stroke-linejoin="round"/></svg>
<div class="a" style="left:452px;top:580px;width:342px;height:2px;background:linear-gradient(#c0b8a0,#f0f0f0)"></div>

<!-- ok cancel -->
<div class="a btn" style="left:642px;top:586px;width:73px;height:24px;border-color:#7a8696"></div>
<div class="a" style="left:642px;top:591px;width:73px;text-align:center;font-size:12px;color:#46568a;letter-spacing:-0.3px">OK</div>
<div class="a btn" style="left:720px;top:586px;width:72px;height:24px;border-color:#7a8696"></div>
<div class="a" style="left:720px;top:591px;width:72px;text-align:center;font-size:12px;color:#46568a;letter-spacing:-0.8px">Cancel</div>
</body></html>
